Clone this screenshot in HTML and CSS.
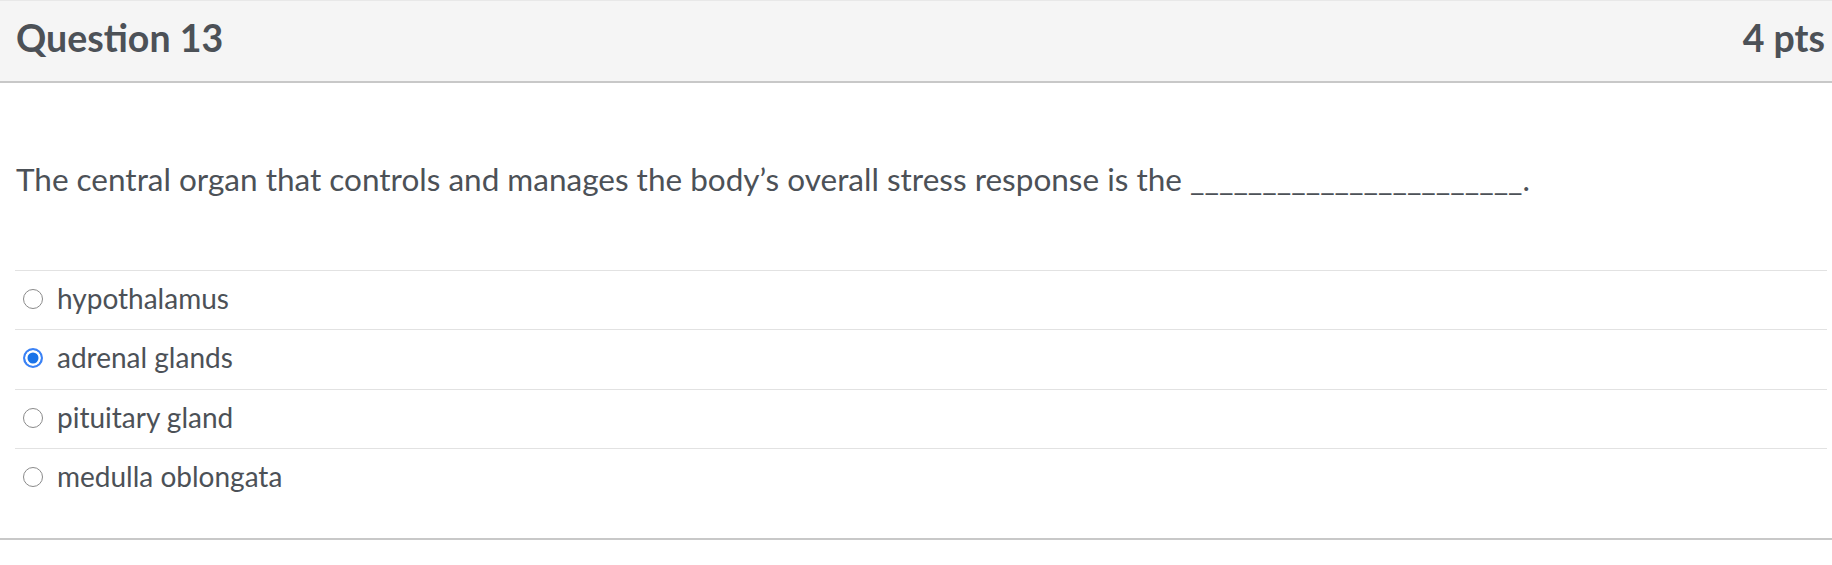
FILE: index.html
```html
<!DOCTYPE html>
<html>
<head>
<meta charset="utf-8">
<link rel="stylesheet" href="styles.css">
</head>
<body>
<div class="question">
  <div class="q-header">
    <span class="q-name">Question 13</span>
    <span class="q-points">4 pts</span>
  </div>
  <div class="q-body">
    <div class="q-text">The central organ that controls and manages the body’s overall stress response is the _______________________.</div>
    <div class="answers">
      <div class="answer"><span class="radio"></span><span class="label">hypothalamus</span></div>
      <div class="answer"><span class="radio checked"></span><span class="label">adrenal glands</span></div>
      <div class="answer"><span class="radio"></span><span class="label">pituitary gland</span></div>
      <div class="answer"><span class="radio"></span><span class="label">medulla oblongata</span></div>
    </div>
  </div>
</div>
</body>
</html>
```
FILE: styles.css
```css
html, body {
  margin: 0;
  padding: 0;
  background: #fff;
}
body {
  font-family: Lato, "Open Sans", sans-serif;
  color: #4c5157;
}
.question {
  border-bottom: 2px solid #c8c8c8;
}
.q-header {
  display: flex;
  justify-content: space-between;
  align-items: center;
  height: 72px;
  padding: 0 7px 8px 16px;
  background: #f5f5f5;
  border-top: 1px solid #e8e8e8;
  border-bottom: 2px solid #c8c8c8;
  font-size: 37.5px;
  font-weight: 700;
}
.q-body {
  padding: 0 5px 31px 15px;
}
.q-text {
  font-size: 31.5px;
  line-height: 44px;
  padding: 74px 0 0 1px;
  margin-bottom: 69px;
}
.answer {
  display: flex;
  align-items: center;
  box-sizing: border-box;
  height: 59.3px;
  padding-bottom: 4px;
  border-top: 1px solid #e2e2e2;
  font-size: 28px;
}
.radio {
  box-sizing: border-box;
  width: 20px;
  height: 20px;
  border-radius: 50%;
  border: 1.5px solid #8a8a8a;
  margin: 2px 14px 0 8px;
  background: #fff;
  flex: none;
}
.radio.checked {
  border: 2px solid #3b82f6;
  background: #1a73e8;
  box-shadow: inset 0 0 0 2.5px #fff;
}
.label {
  line-height: 34px;
}
```
